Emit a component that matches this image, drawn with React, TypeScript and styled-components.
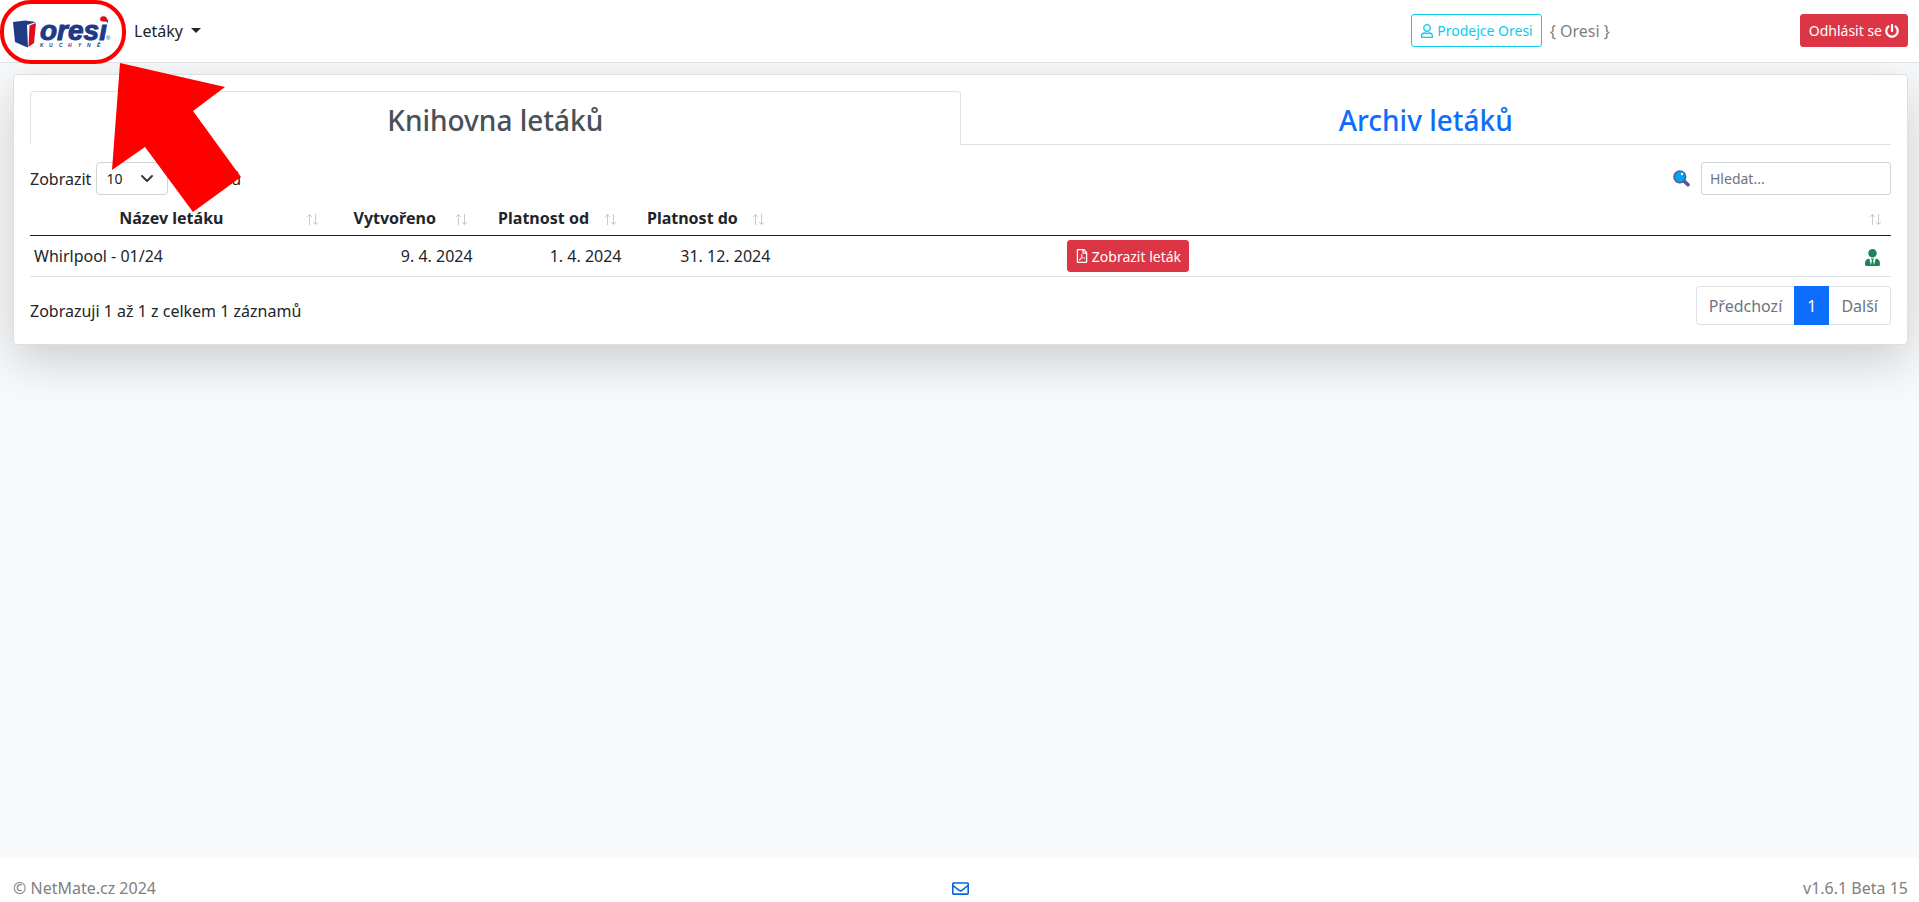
import React from "react";
import styled, { createGlobalStyle, css } from "styled-components";
import { FaPowerOff, FaRegEnvelope, FaRegFilePdf, FaRegUser, FaUserTie } from "react-icons/fa";

const GlobalStyle = createGlobalStyle`
  *, *::before, *::after { box-sizing: border-box; }
  body {
    margin: 0;
    background: #f8f9fb;
    color: #212529;
    font-family: "Noto Sans", "Open Sans", sans-serif;
    font-size: 16px;
    line-height: 24px;
  }
  button, input, select { font-family: inherit; }
`;

const Page = styled.div`
  position: relative;
  min-height: 100vh;
  display: flex;
  flex-direction: column;
  overflow: hidden;
`;

const Navbar = styled.header`
  position: relative;
  z-index: 1;
  display: flex;
  align-items: center;
  justify-content: space-between;
  height: 63px;
  padding: 0 11px 1px 13px;
  background: #fff;
  border-bottom: 1px solid #dee2e6;
`;

const NavGroup = styled.div`
  display: flex;
  align-items: center;
`;

const Brand = styled.a`
  display: flex;
  margin-right: 20px;
`;

const NavMenu = styled.button`
  display: flex;
  align-items: center;
  gap: 8px;
  padding: 0;
  border: 0;
  background: none;
  color: #212529;
  font-size: 16px;
  line-height: 24px;
`;

const Caret = styled.span`
  border-top: 5px solid currentColor;
  border-left: 5px solid transparent;
  border-right: 5px solid transparent;
`;

const Button = styled.button<{ $variant: "danger" | "outline"; $size?: "small" }>`
  display: inline-flex;
  align-items: center;
  justify-content: center;
  gap: 3px;
  height: ${(p) => (p.$size === "small" ? 32 : 33)}px;
  padding: 0 ${(p) => (p.$size === "small" ? 7 : 8)}px;
  border: 1px solid #dc3545;
  border-radius: 3px;
  background: #dc3545;
  color: #fff;
  font-size: 14px;
  line-height: 21px;
  white-space: nowrap;
  ${(p) =>
    p.$variant === "outline" &&
    css`
      border-color: #0dcaf0;
      background: #fff;
      color: #0dcaf0;
    `}
`;

const Company = styled.span`
  width: 258px;
  padding-left: 8px;
  color: #808080;
`;

const Main = styled.main`
  flex: 1;
  padding: 11px 11px 24px 13px;
`;

const Card = styled.section`
  padding: 16px 16px 19px;
  border: 1px solid #dcdfe2;
  border-radius: 4px;
  background: #fff;
  box-shadow: 0 16px 48px rgba(0, 0, 0, 0.175);
`;

const Tabs = styled.nav`
  display: flex;
  border-bottom: 1px solid #dee2e6;
`;

const Tab = styled.a<{ $active?: boolean }>`
  flex: 1;
  height: 54px;
  margin-bottom: -1px;
  padding: 11px 16px 8px;
  border: 1px solid transparent;
  border-radius: 4px 4px 0 0;
  color: #0d6efd;
  font-size: 28px;
  font-weight: 500;
  line-height: 34px;
  text-align: center;
  text-decoration: none;
  ${(p) =>
    p.$active &&
    css`
      border-color: #dee2e6 #dee2e6 #fff;
      background: #fff;
      color: #495057;
    `}
`;

const Toolbar = styled.div`
  display: flex;
  justify-content: space-between;
  margin-top: 17px;
`;

const Field = styled.label`
  display: flex;
  align-items: center;
  gap: 5px;
`;

const SelectBox = styled.span`
  position: relative;
  display: inline-flex;
  svg {
    position: absolute;
    right: 15px;
    top: 12px;
    pointer-events: none;
  }
`;

const Select = styled.select`
  appearance: none;
  width: 72px;
  height: 33px;
  padding: 0 9px;
  border: 1px solid #ced4da;
  border-radius: 4px;
  background: #fff;
  color: #212529;
  font-size: 14px;
`;

const SearchInput = styled.input`
  width: 190px;
  height: 33px;
  margin-left: 6px;
  padding: 0 8px;
  border: 1px solid #ced4da;
  border-radius: 3px;
  background: #fff;
  font-size: 14px;
  &::placeholder { color: #6c757d; opacity: 1; }
`;

const Table = styled.table`
  width: 100%;
  margin-top: 6px;
  border-collapse: separate;
  border-spacing: 0;
  table-layout: fixed;
`;

const HeadCell = styled.th`
  position: relative;
  height: 35px;
  padding: 0 19px 0 4px;
  border-bottom: 1px solid #212529;
  font-weight: 700;
  white-space: nowrap;
  svg {
    position: absolute;
    right: 9px;
    bottom: 9px;
  }
`;

const Cell = styled.td<{ $align?: "left" | "center" | "right" }>`
  height: 41px;
  padding: 4px;
  border-bottom: 1px solid #dee2e6;
  text-align: ${(p) => p.$align ?? "left"};
  vertical-align: middle;
  button, svg { vertical-align: middle; }
`;

const TableFooter = styled.div`
  display: flex;
  justify-content: space-between;
  margin-top: 9px;
`;

const Info = styled.p`
  margin: 0;
  padding-top: 13px;
`;

const Pagination = styled.nav`
  display: flex;
`;

const PageButton = styled.button<{ $current?: boolean }>`
  height: 39px;
  padding: 0 12px;
  border: 1px solid #dee2e6;
  background: #fff;
  color: #6c757d;
  font-size: 16px;
  line-height: 24px;
  &:first-child { border-right: 0; border-radius: 4px 0 0 4px; }
  &:last-child { border-left: 0; border-radius: 0 4px 4px 0; }
  ${(p) =>
    p.$current &&
    css`
      border-color: #0d6efd;
      background: #0d6efd;
      color: #fff;
    `}
`;

const Footer = styled.footer`
  position: relative;
  display: grid;
  grid-template-columns: 1fr auto 1fr;
  align-items: center;
  padding: 18px 11px 2px 13px;
  background: #fff;
  color: #808080;
  a { display: flex; color: #0b66dc; }
  span:last-child { text-align: right; }
`;

const Annotation = styled.svg`
  position: absolute;
  z-index: 2;
  top: 0;
  left: 0;
  pointer-events: none;
`;

const Logo = () => (
  <svg width="101" height="40" viewBox="0 0 101 40" role="img" aria-label="Oresi kuchyně">
    <path d="M0 11 L12 9.5 L23 11 L14 14 L15 36.5 L11 35 L2 31 Z" fill="#203a86" />
    <path d="M16.5 14.5 L23 12 L21 32 L15.5 36 Z" fill="#e30a1c" />
    <text x="27" y="29" fontFamily="Liberation Sans, sans-serif" fontSize="28" fontWeight="700" fontStyle="italic" fill="#203a86" stroke="#203a86" strokeWidth="1">oresi</text>
    <ellipse cx="90.5" cy="8" rx="3.4" ry="2.8" fill="#e30a1c" />
    <path d="M86 10.6h8v2.4h-8z" fill="#fff" />
    <text x="93" y="29" fontFamily="Liberation Sans, sans-serif" fontSize="6" fill="#203a86">®</text>
    <text x="27 36 46 55 65 74 84" y="36" fontFamily="Liberation Sans, sans-serif" fontSize="5" fontWeight="700" fontStyle="italic" fill="#203a86">KUCHYNĚ</text>
  </svg>
);

const SortIcon = () => (
  <svg width="13" height="13" viewBox="0 0 13 13" fill="none" stroke="#c8c9ca" aria-hidden="true">
    <path d="M3.5 12V1.5M1 4l2.5-2.5L6 4M9.5 1v10.5M7 9l2.5 2.5L12 9" />
  </svg>
);

const Chevron = () => (
  <svg width="12" height="9" viewBox="0 0 12 9" fill="none" stroke="#343a40" strokeWidth="2" strokeLinecap="round" strokeLinejoin="round" aria-hidden="true">
    <path d="M1 2l5 5 5-5" />
  </svg>
);

const Magnifier = () => (
  <svg width="17" height="17" viewBox="0 0 17 17" aria-hidden="true">
    <path d="M10.5 10.5l4.5 4.2" stroke="#5d5297" strokeWidth="3.6" strokeLinecap="round" />
    <circle cx="6.8" cy="6.8" r="5.9" fill="#00a4ef" stroke="#5d5297" strokeWidth="1.4" />
    <circle cx="9" cy="4" r="1.2" fill="#fff" />
  </svg>
);

const columns = [
  { title: "Název letáku", width: "16%", sortable: true },
  { title: "Vytvořeno", width: "8%", sortable: true },
  { title: "Platnost od", width: "8%", sortable: true },
  { title: "Platnost do", width: "8%", sortable: true },
  { title: "", width: "38%", sortable: false },
  { title: "", width: "20%", sortable: false },
  { title: "", width: "2%", sortable: true },
];

const leaflets = [{ name: "Whirlpool - 01/24", created: "9. 4. 2024", from: "1. 4. 2024", to: "31. 12. 2024" }];

export default function App() {
  return (
    <Page>
      <GlobalStyle />
      <Navbar>
        <NavGroup>
          <Brand href="#"><Logo /></Brand>
          <NavMenu type="button">Letáky <Caret /></NavMenu>
        </NavGroup>
        <NavGroup>
          <Button type="button" $variant="outline"><FaRegUser size={14} />Prodejce Oresi</Button>
          <Company>{"{ Oresi }"}</Company>
          <Button type="button" $variant="danger">Odhlásit se <FaPowerOff size={14} /></Button>
        </NavGroup>
      </Navbar>

      <Main>
        <Card>
          <Tabs>
            <Tab href="#knihovna" $active>Knihovna letáků</Tab>
            <Tab href="#archiv">Archiv letáků</Tab>
          </Tabs>
          <Toolbar>
            <Field>
              Zobrazit
              <SelectBox>
                <Select defaultValue="10">
                  <option>10</option>
                  <option>25</option>
                  <option>50</option>
                </Select>
                <Chevron />
              </SelectBox>
              záznamů
            </Field>
            <Field>
              <Magnifier />
              <SearchInput type="search" placeholder="Hledat..." aria-label="Hledat" />
            </Field>
          </Toolbar>
          <Table>
            <colgroup>
              {columns.map((c, i) => <col key={i} width={c.width} />)}
            </colgroup>
            <thead>
              <tr>
                {columns.map((c, i) => (
                  <HeadCell key={i}>{c.title}{c.sortable && <SortIcon />}</HeadCell>
                ))}
              </tr>
            </thead>
            <tbody>
              {leaflets.map((l) => (
                <tr key={l.name}>
                  <Cell>{l.name}</Cell>
                  <Cell $align="right">{l.created}</Cell>
                  <Cell $align="right">{l.from}</Cell>
                  <Cell $align="right">{l.to}</Cell>
                  <Cell $align="center">
                    <Button type="button" $variant="danger" $size="small"><FaRegFilePdf size={14} />Zobrazit leták</Button>
                  </Cell>
                  <Cell />
                  <Cell $align="center"><FaUserTie size={17} color="#198754" /></Cell>
                </tr>
              ))}
            </tbody>
          </Table>
          <TableFooter>
            <Info>Zobrazuji 1 až 1 z celkem 1 záznamů</Info>
            <Pagination aria-label="Stránkování">
              <PageButton type="button">Předchozí</PageButton>
              <PageButton type="button" $current>1</PageButton>
              <PageButton type="button">Další</PageButton>
            </Pagination>
          </TableFooter>
        </Card>
      </Main>

      <Footer>
        <span>© NetMate.cz 2024</span>
        <a href="mailto:info@netmate.cz" aria-label="E-mail"><FaRegEnvelope size={17} /></a>
        <span>v1.6.1 Beta 15</span>
      </Footer>

      <Annotation width="250" height="220" viewBox="0 0 250 220" aria-hidden="true">
        <rect x="2" y="2" width="122" height="60" rx="29" fill="none" stroke="#f00" strokeWidth="4" />
        <polygon points="120,63 225,87 193,111 241,177 193,212 145,147 112,170" fill="#f00" />
      </Annotation>
    </Page>
  );
}
